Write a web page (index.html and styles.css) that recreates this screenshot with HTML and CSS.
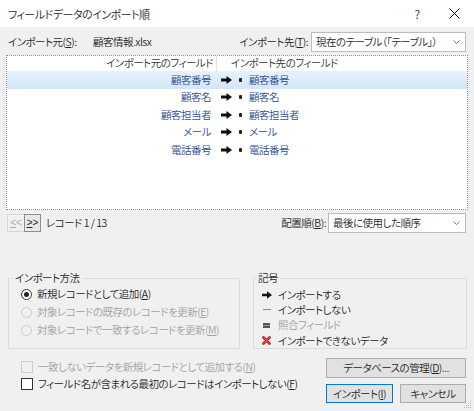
FILE: index.html
```html
<!DOCTYPE html>
<html lang="ja">
<head>
<meta charset="utf-8">
<title>フィールドデータのインポート順</title>
<link rel="stylesheet" href="styles.css">
</head>
<body>
<div class="dialog">
  <div class="titlebar">
    <span class="title">フィールドデータのインポート順</span>
    <span class="tb-help">?</span>
    <span class="tb-close"><svg width="11" height="11" viewBox="0 0 11 11"><path d="M0.5 0.5L10.5 10.5M10.5 0.5L0.5 10.5" stroke="#000" stroke-width="1"/></svg></span>
  </div>

  <div class="toprow">
    <div class="src">
      <span class="src-label">インポート元(<u>S</u>):</span>
      <span class="file">顧客情報.xlsx</span>
    </div>
    <div class="dst">
      <span class="dst-label">インポート先(<u>T</u>):</span>
      <div class="combo combo-dst">
        <span class="combo-text">現在のテーブル（「テーブル」）</span>
        <svg class="chev" width="7" height="4" viewBox="0 0 7 4"><path d="M0.5 0.5L3.5 3.5L6.5 0.5" fill="none" stroke="#777" stroke-width="1"/></svg>
      </div>
    </div>
  </div>

  <div class="list">
    <div class="lhead">
      <div class="hc1">インポート元のフィールド</div>
      <div class="hc2">インポート先のフィールド</div>
    </div>
    <div class="lrow sel">
      <div class="c1">顧客番号</div>
      <div class="c2"><svg width="11" height="8" viewBox="0 0 11 8"><path d="M0 2.5H5.5V0L11 4L5.5 8V5.5H0Z" fill="#111"/></svg></div>
      <div class="c3"><span class="dot"></span></div>
      <div class="c4">顧客番号</div>
    </div>
    <div class="lrow">
      <div class="c1">顧客名</div>
      <div class="c2"><svg width="11" height="8" viewBox="0 0 11 8"><path d="M0 2.5H5.5V0L11 4L5.5 8V5.5H0Z" fill="#111"/></svg></div>
      <div class="c3"><span class="dot"></span></div>
      <div class="c4">顧客名</div>
    </div>
    <div class="lrow">
      <div class="c1">顧客担当者</div>
      <div class="c2"><svg width="11" height="8" viewBox="0 0 11 8"><path d="M0 2.5H5.5V0L11 4L5.5 8V5.5H0Z" fill="#111"/></svg></div>
      <div class="c3"><span class="dot"></span></div>
      <div class="c4">顧客担当者</div>
    </div>
    <div class="lrow">
      <div class="c1">メール</div>
      <div class="c2"><svg width="11" height="8" viewBox="0 0 11 8"><path d="M0 2.5H5.5V0L11 4L5.5 8V5.5H0Z" fill="#111"/></svg></div>
      <div class="c3"><span class="dot"></span></div>
      <div class="c4">メール</div>
    </div>
    <div class="lrow">
      <div class="c1">電話番号</div>
      <div class="c2"><svg width="11" height="8" viewBox="0 0 11 8"><path d="M0 2.5H5.5V0L11 4L5.5 8V5.5H0Z" fill="#111"/></svg></div>
      <div class="c3"><span class="dot"></span></div>
      <div class="c4">電話番号</div>
    </div>
  </div>

  <div class="navrow">
    <div class="navbtns">
      <span class="nb nb-prev"><u>&lt;</u>&lt;</span>
      <span class="nb nb-next"><u>&gt;</u>&gt;</span>
    </div>
    <span class="record">レコード 1 / 13</span>
    <div class="sort">
      <span class="sort-label">配置順(<u>B</u>):</span>
      <div class="combo combo-sort">
        <span class="combo-text">最後に使用した順序</span>
        <svg class="chev" width="7" height="4" viewBox="0 0 7 4"><path d="M0.5 0.5L3.5 3.5L6.5 0.5" fill="none" stroke="#777" stroke-width="1"/></svg>
      </div>
    </div>
  </div>

  <div class="groups">
    <fieldset class="grp grp-method">
      <legend>インポート方法</legend>
      <div class="radio-row">
        <span class="radio on"></span><span>新規レコードとして追加(<u>A</u>)</span>
      </div>
      <div class="radio-row disabled">
        <span class="radio"></span><span>対象レコードの既存のレコードを更新(<u>E</u>)</span>
      </div>
      <div class="radio-row disabled">
        <span class="radio"></span><span>対象レコードで一致するレコードを更新(<u>M</u>)</span>
      </div>
    </fieldset>
    <fieldset class="grp grp-legend">
      <legend>記号</legend>
      <div class="sym-row">
        <span class="sym"><svg width="10" height="8" viewBox="0 0 11 8"><path d="M0 2.5H5.5V0L11 4L5.5 8V5.5H0Z" fill="#111"/></svg></span>
        <span>インポートする</span>
      </div>
      <div class="sym-row">
        <span class="sym"><span class="dash"></span></span>
        <span>インポートしない</span>
      </div>
      <div class="sym-row">
        <span class="sym"><span class="eq"></span></span>
        <span class="gray">照合フィールド</span>
      </div>
      <div class="sym-row">
        <span class="sym"><svg width="9" height="9" viewBox="0 0 9 9"><path d="M1.5 1.5L7.5 7.5M7.5 1.5L1.5 7.5" stroke="#a01818" stroke-width="2.6" stroke-linecap="round"/><path d="M1.5 1.5L7.5 7.5M7.5 1.5L1.5 7.5" stroke="#f04040" stroke-width="1.2" stroke-linecap="round"/></svg></span>
        <span>インポートできないデータ</span>
      </div>
    </fieldset>
  </div>

  <div class="bottom">
    <div class="checks">
      <div class="check-row disabled">
        <span class="cb"></span><span>一致しないデータを新規レコードとして追加する(<u>N</u>)</span>
      </div>
      <div class="check-row">
        <span class="cb"></span><span>フィールド名が含まれる最初のレコードはインポートしない(<u>F</u>)</span>
      </div>
    </div>
    <div class="buttons">
      <button class="btn btn-db" type="button">データベースの管理(<u>D</u>)...</button>
      <div class="btn-pair">
        <button class="btn btn-import" type="button">インポート(<u>I</u>)</button>
        <button class="btn btn-cancel" type="button">キャンセル</button>
      </div>
    </div>
  </div>

  <svg class="grip" width="8" height="8" viewBox="0 0 8 8"><g fill="#b8b8b8"><rect x="6" y="0" width="1" height="1"/><rect x="4" y="2" width="1" height="1"/><rect x="6" y="2" width="1" height="1"/><rect x="2" y="4" width="1" height="1"/><rect x="4" y="4" width="1" height="1"/><rect x="6" y="4" width="1" height="1"/><rect x="0" y="6" width="1" height="1"/><rect x="2" y="6" width="1" height="1"/><rect x="4" y="6" width="1" height="1"/><rect x="6" y="6" width="1" height="1"/></g></svg>
</div>
</body>
</html>
```

FILE: styles.css
```css
* { box-sizing: border-box; }
html, body { margin: 0; padding: 0; }
body {
  width: 474px;
  height: 411px;
  overflow: hidden;
  background: #f0f0f0;
  font-family: "Noto Sans CJK JP", "Noto Sans", sans-serif;
  font-size: 10.5px;
  font-weight: 350;
  letter-spacing: -0.5px;
  line-height: 14px;
  color: #1e1e1e;
  font-feature-settings: "palt";
}
u { text-decoration: underline; text-underline-offset: 1px; }

.dialog { position: relative; width: 474px; height: 411px; }

.titlebar {
  height: 27px;
  background: #fff;
  display: flex;
  align-items: center;
  padding-left: 8px;
}
.title { flex: 1; font-size: 11px; }
.tb-help { width: 34px; text-align: center; font-size: 12px; }
.tb-close { width: 40px; display: flex; justify-content: center; }

.toprow {
  margin-top: 5px;
  height: 20px;
  display: flex;
  align-items: center;
  padding: 0 8px 0 8px;
}
.src { display: flex; align-items: center; }
.src-label { width: 85px; }
.dst { margin-left: auto; display: flex; align-items: center; }
.dst-label { margin-right: 3px; }

.combo {
  height: 20px;
  background: #fff;
  border: 1px solid #bcbcbc;
  display: flex;
  align-items: center;
  padding: 0 5px 0 4px;
}
.combo-text { flex: 1; white-space: nowrap; }
.chev { flex: none; }
.combo-dst { width: 155px; }
.combo-sort { width: 138px; }

.list {
  margin: 3px 6px 0 6px;
  height: 155px;
  background: #fff;
  border: 1px dotted #8f8f8f;
  color: #2d4e8e;
}
.lhead {
  height: 15px;
  display: flex;
  color: #333;
}
.hc1 {
  width: 210px;
  text-align: right;
  padding-right: 3px;
  border-right: 1px solid #e3e3e3;
}
.hc2 { padding-left: 14px; }

.lrow {
  height: 17.5px;
  display: flex;
  align-items: center;
}
.lrow.sel { background: linear-gradient(#e8f2fc, #d3e6f8); }
.c1 { width: 210px; text-align: right; padding-right: 6px; }
.c2 { width: 19px; padding-left: 4px; display: flex; align-items: center; }
.c3 { width: 13px; padding-left: 3px; display: flex; align-items: center; }
.dot { width: 3px; height: 4px; background: #222; border-radius: 1px; }

.navrow {
  margin-top: 3px;
  height: 20px;
  display: flex;
  align-items: center;
  padding: 0 8px 0 7px;
}
.navbtns { display: flex; }
.nb {
  width: 17px;
  height: 18px;
  display: flex;
  align-items: center;
  justify-content: center;
  font-size: 10px;
  letter-spacing: 0;
  font-family: "Liberation Sans", sans-serif;
}
.nb-prev { color: #a9a9a9; border: 1px solid #d6d6d6; border-right: none; }
.nb-next { color: #222; border: 1px solid #8e8e8e; background: #e8e8e8; }
.record { margin-left: 5px; }
.sort { margin-left: auto; display: flex; align-items: center; }
.sort-label { margin-right: 2px; }

.groups {
  margin-top: 38px;
  height: 78px;
  display: flex;
  padding: 0 7px 0 8px;
}
.grp {
  margin: 0;
  min-width: 0;
  border: 1px solid #dcdcdc;
  padding: 0 0 0 4px;
}
.grp legend { padding: 0 2px; line-height: 14px; }
.grp-method { width: 232px; }
.grp-legend { margin-left: 13px; flex: 1; padding-left: 2px; padding-top: 2px; }

.radio-row {
  height: 18px;
  display: flex;
  align-items: center;
  padding-left: 8px;
}
.radio {
  width: 11px;
  height: 11px;
  border: 1px solid #333;
  border-radius: 50%;
  background: #fff;
  margin-right: 5px;
  display: flex;
  align-items: center;
  justify-content: center;
}
.radio.on::after {
  content: "";
  width: 5px;
  height: 5px;
  border-radius: 50%;
  background: #222;
}
.radio-row.disabled { color: #a0a0a0; }
.radio-row.disabled .radio { border-color: #cdcdcd; background: #f0f0f0; }

.sym-row {
  height: 15.3px;
  display: flex;
  align-items: center;
  padding-left: 6px;
}
.sym { width: 16px; display: flex; align-items: center; }
.dash { width: 8px; height: 1px; background: #8a8a8a; margin-left: 1px; }
.eq {
  width: 7px;
  height: 5px;
  margin-left: 1px;
  border-top: 2px solid #555;
  border-bottom: 2px solid #555;
  background: #9a9a9a;
}
.gray { color: #a0a0a0; }

.bottom {
  margin-top: 9px;
  display: flex;
  padding: 0 8px 0 21px;
}
.checks { flex: 1; padding-top: 0.5px; }
.check-row { height: 17px; display: flex; align-items: center; }
.cb {
  width: 12px;
  height: 12px;
  border: 1px solid #333;
  background: #fff;
  margin-right: 5px;
  flex: none;
}
.check-row.disabled { color: #a0a0a0; }
.check-row.disabled .cb { border-color: #cdcdcd; background: #f0f0f0; }

.buttons { width: 140px; display: flex; flex-direction: column; }
.btn {
  font: inherit;
  letter-spacing: inherit;
  color: #1e1e1e;
  background: #e1e1e1;
  border: 1px solid #adadad;
  padding: 0;
  margin: 0;
  height: 20px;
}
.btn-db { width: 140px; }
.btn-pair { margin-top: 6px; display: flex; justify-content: space-between; }
.btn-import { width: 67px; height: 19px; border-color: #0078d7; }
.btn-cancel { width: 66px; height: 19px; }

.grip { position: absolute; right: 2px; bottom: 2px; }
```
